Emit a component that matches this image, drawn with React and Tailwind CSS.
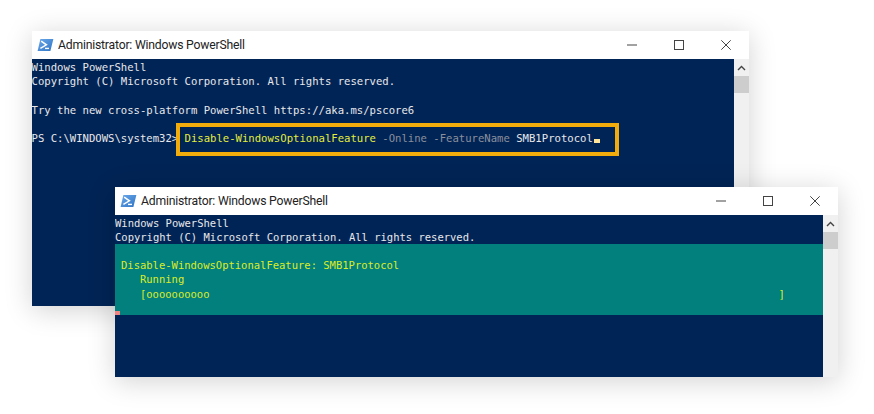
import React from "react";

const CONSOLE_FONT = "font-['DejaVu_Sans_Mono','Liberation_Mono',monospace] whitespace-pre";

function PsIcon() {
  return (
    <svg width="17" height="14" viewBox="0 0 17 14">
      <defs>
        <linearGradient id="psBlue" x1="0" y1="0" x2="1" y2="1">
          <stop offset="0" stopColor="#6aa8ea" />
          <stop offset="1" stopColor="#2f74c4" />
        </linearGradient>
      </defs>
      <path d="M3.4 1h13l-3 12H.6z" fill="url(#psBlue)" />
      <path d="M4.2 3.2 9.4 6.8 3.4 10.4" fill="none" stroke="#fff" strokeWidth="1.5" />
      <path d="M8 10.4h4" fill="none" stroke="#fff" strokeWidth="1.4" />
    </svg>
  );
}

function CaptionButtons() {
  return (
    <div className="flex h-full items-center text-[#444]">
      <div className="flex w-[46px] justify-center">
        <svg width="10" height="10" viewBox="0 0 10 10">
          <path d="M0 5h10" stroke="currentColor" strokeWidth="1" />
        </svg>
      </div>
      <div className="flex w-[48px] justify-center">
        <svg width="10" height="10" viewBox="0 0 10 10">
          <rect x=".5" y=".5" width="9" height="9" fill="none" stroke="currentColor" strokeWidth="1" />
        </svg>
      </div>
      <div className="flex w-[46px] justify-center">
        <svg width="10" height="10" viewBox="0 0 10 10">
          <path d="M.3.3l9.4 9.4M9.7.3.3 9.7" stroke="currentColor" strokeWidth="1" />
        </svg>
      </div>
    </div>
  );
}

function Scrollbar() {
  return (
    <div className="flex w-[15px] shrink-0 flex-col bg-[#f0f0f0]">
      <div className="flex h-[17px] items-center justify-center">
        <svg width="9" height="6" viewBox="0 0 9 6">
          <path d="M1 5l3.5-3.5L8 5" fill="none" stroke="#444" strokeWidth="1.4" />
        </svg>
      </div>
      <div className="h-[17px] bg-[#cdcdcd]" />
    </div>
  );
}

function Window({ className, consoleClass, children }) {
  return (
    <div className={`absolute flex flex-col bg-white shadow-[0_4px_26px_rgba(0,0,0,0.18)] ${className}`}>
      <div className="flex h-7 shrink-0 items-center justify-between">
        <div className="flex items-center gap-[4px] pl-[5px]">
          <PsIcon />
          <span className="font-['Roboto',sans-serif] text-[12.2px] tracking-[-0.2px] text-[#222]">
            Administrator: Windows PowerShell
          </span>
        </div>
        <CaptionButtons />
      </div>
      <div className="flex min-h-0 flex-1">
        <div className={`min-w-0 flex-1 overflow-hidden bg-[#012456] pt-px text-[#e8e8ea] ${CONSOLE_FONT} ${consoleClass}`}>
          {children}
        </div>
        <Scrollbar />
      </div>
    </div>
  );
}

export default function App() {
  return (
    <div className="relative h-[414px] w-[874px] overflow-hidden bg-white">
      <Window
        className="left-[32px] top-[31px] h-[275px] w-[717px]"
        consoleClass="text-[10.6px] leading-[14.3px]"
      >
        <div className="-ml-[0.5px]">
          <div>Windows PowerShell</div>
          <div>Copyright (C) Microsoft Corporation. All rights reserved.</div>
          <div>&nbsp;</div>
          <div>Try the new cross-platform PowerShell https://aka.ms/pscore6</div>
          <div>&nbsp;</div>
          <div>
            {"PS C:\\WINDOWS\\system32> "}
            <span className="text-[#e4ec3c]">Disable-WindowsOptionalFeature</span>
            <span className="text-[#8a8f9c]"> -Online -FeatureName</span>
            <span> SMB1Protocol</span>
            <span className="relative inline-block w-[6.4px]">
              <span className="absolute -bottom-[1px] left-[1px] h-1 w-[6px] bg-[#fde49a]" />
            </span>
          </div>
        </div>
      </Window>

      {/* highlight round the command */}
      <div className="absolute left-[176px] top-[123px] h-[33px] w-[443px] border-4 border-[#f2ac0c]" />

      <Window
        className="left-[115px] top-[187px] h-[190px] w-[723px]"
        consoleClass="text-[10.5px] leading-[14px]"
      >
        <div>Windows PowerShell</div>
        <div>Copyright (C) Microsoft Corporation. All rights reserved.</div>
        <div className="relative h-[71px] bg-[#01807d] pt-[14px] pl-[6px] leading-[14.3px] text-[#dcec28]">
          <div>Disable-WindowsOptionalFeature: SMB1Protocol</div>
          <div>{"   Running"}</div>
          <div>{"   [oooooooooo" + " ".repeat(90) + "]"}</div>
          <div className="absolute bottom-0 left-0 h-1 w-[5px] bg-[#f08585]" />
        </div>
      </Window>
    </div>
  );
}
